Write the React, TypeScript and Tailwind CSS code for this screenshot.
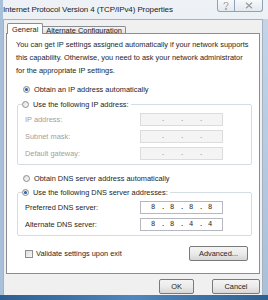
import React from "react";

type RadioProps = { checked?: boolean; label: string };

const Radio = ({ checked, label }: RadioProps) => (
  <span className="flex items-center h-[13px] gap-[4px] bg-white pr-[2px]">
    <span className="w-[7px] h-[7px] rounded-full border border-[#8d8d8d] bg-gradient-to-br from-[#e0e0e0] to-[#fafafa] flex items-center justify-center">
      {checked && <span className="w-[3px] h-[3px] rounded-full bg-[#1d5fae]" />}
    </span>
    <span className="text-[#1e1e1e]">{label}</span>
  </span>
);

const IpField = ({ values, disabled }: { values?: string[]; disabled?: boolean }) => (
  <div
    className={`w-[83px] h-[13px] border flex items-center px-[4px] font-['DejaVu_Sans_Mono',monospace] text-[7px] ${
      disabled
        ? "bg-[#f4f4f4] border-[#dcdcdc] text-[#9a9a9a]"
        : "bg-white border-[#b5b8bf] text-[#2a2a2a]"
    }`}
  >
    {[0, 1, 2, 3].map((i) => (
      <React.Fragment key={i}>
        {i > 0 && <span className="w-[3px] text-center">.</span>}
        <span className="flex-1 text-center">{values ? values[i] : ""}</span>
      </React.Fragment>
    ))}
  </div>
);

const Row = ({ label, children, disabled }: { label: string; children: React.ReactNode; disabled?: boolean }) => (
  <div className="flex items-center h-[13px]">
    <span className={`w-[115px] ${disabled ? "text-[#a0a0a0]" : "text-[#1e1e1e]"}`}>{label}</span>
    {children}
  </div>
);

const Button = ({ label, className }: { label: string; className: string }) => (
  <button
    className={`h-[15px] rounded-[2px] border border-[#7a7a7a] bg-gradient-to-b from-[#f4f4f4] via-[#ebebeb] to-[#d6d6d6] text-[#1e1e1e] flex items-center justify-center ${className}`}
  >
    {label}
  </button>
);

export default function App() {
  return (
    <div className="w-[268px] h-[300px] overflow-hidden flex flex-col bg-gradient-to-b from-[#eef2f6] to-[#cfdceb] font-['Liberation_Sans',Arial,sans-serif] text-[7.4px] leading-[13px]">
      {/* title bar */}
      <div className="h-[19px] flex items-start border-l-[3px] border-[#a9c0da]">
        <span className="mt-[3px] text-[8px] text-[#1b1b1b] tracking-[-0.1px]">
          Internet Protocol Version 4 (TCP/IPv4) Properties
        </span>
        <div className="ml-auto mr-[5px] flex h-[12px]">
          <div className="w-[18px] border border-t-0 border-[#8fa2b8] rounded-bl-[3px] bg-gradient-to-b from-[#f7f9fb] to-[#e3e9f0] flex items-center justify-center">
            <svg width="6" height="8" viewBox="0 0 6 8" fill="none" stroke="#8a8a8a" strokeWidth="0.9">
              <path d="M1 2.2a2 2 0 1 1 3 1.6c-.6.4-1 .8-1 1.5" />
              <circle cx="3" cy="7" r="0.5" fill="#8a8a8a" />
            </svg>
          </div>
          <div className="w-[28px] border border-l-0 border-t-0 border-[#8fa2b8] rounded-br-[3px] bg-gradient-to-b from-[#f7f9fb] to-[#e3e9f0] flex items-center justify-center">
            <svg width="8" height="7" viewBox="0 0 8 7" fill="none" stroke="#9a9a9a" strokeWidth="1.2">
              <path d="M1 0.8l6 5.4M7 0.8l-6 5.4" />
            </svg>
          </div>
        </div>
      </div>

      {/* body */}
      <div className="flex h-[276px] border-l-[3px] border-[#a9c0da]">
        <div className="w-[260px] h-[276px] bg-[#f0f0f0] border-l border-t border-r border-[#a3b1c2] flex flex-col">
          {/* tabs */}
          <div className="flex items-end h-[10px] pl-[3px] mt-[3px]">
            <div className="h-[11px] px-[4px] bg-white border border-b-0 border-[#898c95] rounded-t-[2px] relative top-[1px] z-10 flex items-center text-[#1e1e1e]">
              General
            </div>
            <div className="h-[7px] px-[3px] bg-gradient-to-b from-[#f4f4f4] to-[#e2e2e2] border border-l-0 border-b-0 border-[#898c95] rounded-tr-[2px] flex items-center text-[#1e1e1e]">
              Alternate Configuration
            </div>
          </div>

          {/* tab panel */}
          <div className="ml-[2px] w-[254px] h-[241px] bg-white border border-[#898c95] flex flex-col px-[9px] pt-[4px]">
            <p className="text-[#1e1e1e] leading-[13px]">
              You can get IP settings assigned automatically if your network supports this capability. Otherwise, you need to ask your network administrator for the appropriate IP settings.
            </p>

            <div className="mt-[6px] pl-[7px]">
              <Radio checked label="Obtain an IP address automatically" />
            </div>

            <fieldset className="mt-[2px] ml-[1px] w-[235px] border border-[#d5dde4] rounded-[2px] px-[7px] pb-[4px]">
              <legend className="-ml-[3px] px-0">
                <Radio label="Use the following IP address:" />
              </legend>
              <div className="flex flex-col gap-[4px] mt-[2px]">
                <Row label="IP address:" disabled>
                  <IpField disabled />
                </Row>
                <Row label="Subnet mask:" disabled>
                  <IpField disabled />
                </Row>
                <Row label="Default gateway:" disabled>
                  <IpField disabled />
                </Row>
              </div>
            </fieldset>

            <div className="mt-[7px] pl-[7px]">
              <Radio label="Obtain DNS server address automatically" />
            </div>

            <fieldset className="mt-[1px] ml-[1px] w-[235px] border border-[#d5dde4] rounded-[2px] px-[7px] pb-[4px]">
              <legend className="-ml-[3px] px-0">
                <Radio checked label="Use the following DNS server addresses:" />
              </legend>
              <div className="flex flex-col gap-[4px] mt-[2px]">
                <Row label="Preferred DNS server:">
                  <IpField values={["8", "8", "8", "8"]} />
                </Row>
                <Row label="Alternate DNS server:">
                  <IpField values={["8", "8", "4", "4"]} />
                </Row>
              </div>
            </fieldset>

            <div className="mt-[10px] flex items-center">
              <span className="ml-[9px] w-[8px] h-[8px] border border-[#8e8f8f] bg-gradient-to-br from-[#dcdcdc] to-[#f8f8f8]" />
              <span className="ml-[3px] text-[#1e1e1e]">Validate settings upon exit</span>
              <Button label="Advanced..." className="ml-auto mr-[2px] w-[59px] h-[14px]" />
            </div>
          </div>

          {/* footer buttons */}
          <div className="flex mt-[5px] ml-[155px] gap-[18px]">
            <Button label="OK" className="w-[35px]" />
            <Button label="Cancel" className="w-[48px]" />
          </div>
        </div>
        <div className="flex-1 bg-gradient-to-b from-[#c3d4e7] to-[#a9c0da]" />
      </div>

      {/* taskbar */}
      <div className="flex-1 bg-gradient-to-r from-[#2e5f91] via-[#4f86bd] to-[#2e5f91]" />
    </div>
  );
}
